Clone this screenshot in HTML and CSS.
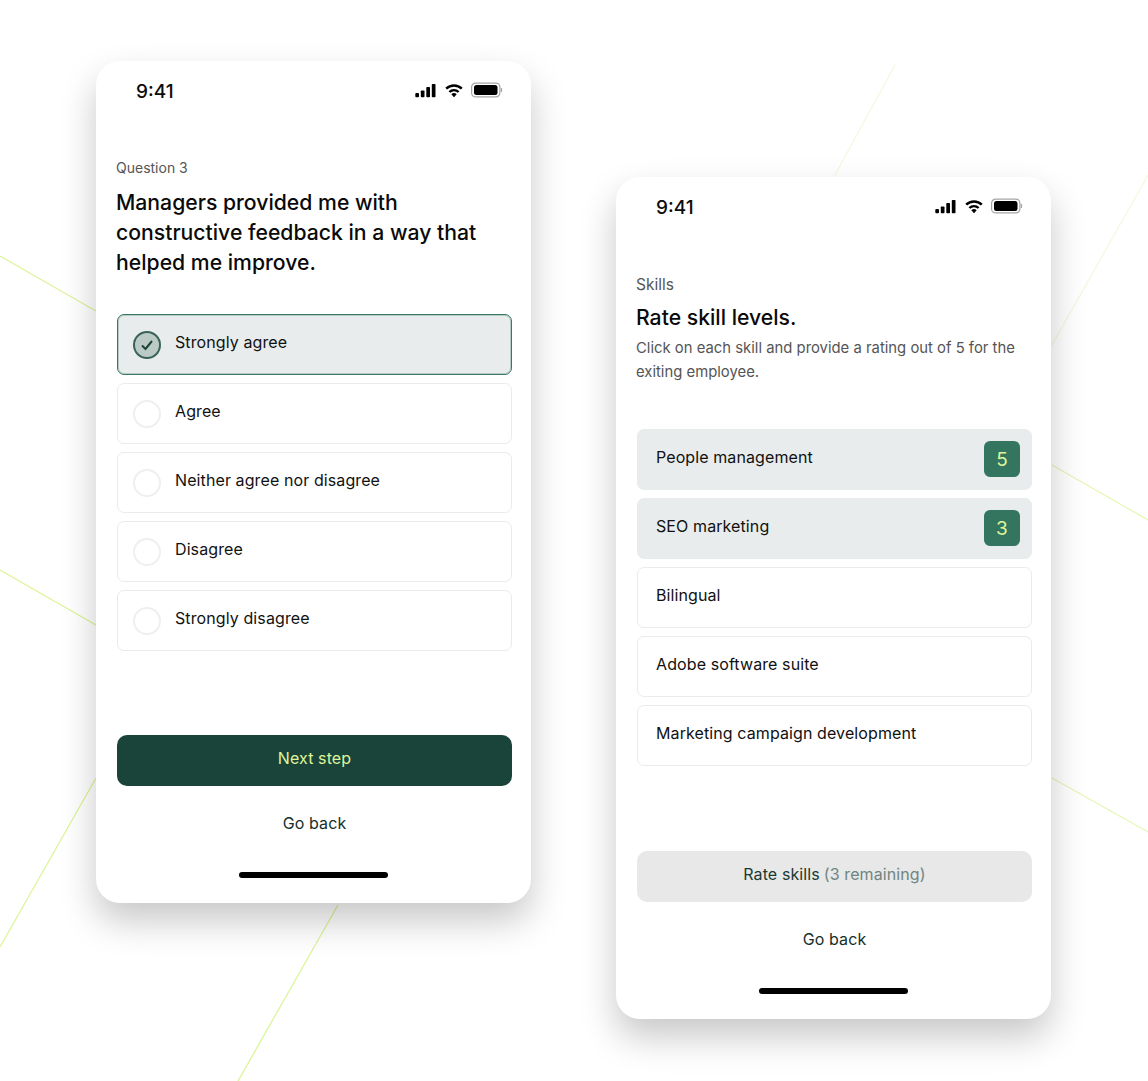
FILE: index.html
```html
<!DOCTYPE html>
<html lang="en">
<head>
<meta charset="utf-8">
<title>Survey screens</title>
<link rel="stylesheet" href="styles.css">
</head>
<body>
<main class="canvas">
  <svg class="lines" width="1148" height="1081" viewBox="0 0 1148 1081" aria-hidden="true">
    <path d="M0 256L96 311M0 570L96 625M0 947L96 778M238 1081L338 905"/>
    <path class="faint" d="M835 175L895 65M1052 345L1148 175"/>
    <path class="mid" d="M1052 465L1148 520M1052 778L1148 832"/>
  </svg>

  <section class="phone phone-left">
    <div class="status"><span class="time">9:41</span>
      <svg class="status-icons" width="88" height="16" viewBox="0 0 88 16"><rect x=".3" y="11" width="3.700" height="4.200" rx="1"/><rect x="5.800" y="8.500" width="3.700" height="6.700" rx=".8"/><rect x="11.300" y="5" width="3.700" height="10.200" rx=".8"/><rect x="16.800" y="2" width="3.700" height="13.200" rx=".8"/><path class="arc" d="M31.200 6.700A11 11 0 0 1 46.800 6.700M34.400 10A6.500 6.500 0 0 1 43.600 10"/><path d="M39 15.200L36.300 12.200a4 4 0 0 1 5.400 0z"/><rect class="batt" x="56.600" y="1.100" width="28.300" height="13.800" rx="4"/><rect x="59" y="3" width="23.500" height="10" rx="2.500"/><rect class="nub" x="85.800" y="6" width="1.300" height="4" rx=".6"/></svg>
    </div>
    <div class="body">
      <p class="eyebrow">Question 3</p>
      <h1 class="title">Managers provided me with constructive feedback in a way that helped me improve.</h1>
      <ul class="list list-q">
        <li class="row picked"><span class="radio on"><svg width="14" height="12" viewBox="0 0 14 12"><path d="M2 6.500L5.500 10L12 2"/></svg></span>Strongly agree</li>
        <li class="row"><span class="radio"></span>Agree</li>
        <li class="row"><span class="radio"></span>Neither agree nor disagree</li>
        <li class="row"><span class="radio"></span>Disagree</li>
        <li class="row"><span class="radio"></span>Strongly disagree</li>
      </ul>
    </div>
    <div class="actions">
      <div class="btn btn-dark">Next step</div>
      <div class="back">Go back</div>
      <div class="home"></div>
    </div>
  </section>

  <section class="phone phone-right">
    <div class="status"><span class="time">9:41</span>
      <svg class="status-icons" width="88" height="16" viewBox="0 0 88 16"><rect x=".3" y="11" width="3.700" height="4.200" rx="1"/><rect x="5.800" y="8.500" width="3.700" height="6.700" rx=".8"/><rect x="11.300" y="5" width="3.700" height="10.200" rx=".8"/><rect x="16.800" y="2" width="3.700" height="13.200" rx=".8"/><path class="arc" d="M31.200 6.700A11 11 0 0 1 46.800 6.700M34.400 10A6.500 6.500 0 0 1 43.600 10"/><path d="M39 15.200L36.300 12.200a4 4 0 0 1 5.400 0z"/><rect class="batt" x="56.600" y="1.100" width="28.300" height="13.800" rx="4"/><rect x="59" y="3" width="23.500" height="10" rx="2.500"/><rect class="nub" x="85.800" y="6" width="1.300" height="4" rx=".6"/></svg>
    </div>
    <div class="body">
      <p class="eyebrow eyebrow-lg">Skills</p>
      <h1 class="title title-one">Rate skill levels.</h1>
      <p class="desc">Click on each skill and provide a rating out of 5 for the exiting employee.</p>
      <ul class="list list-s">
        <li class="row skill rated">People management<span class="score">5</span></li>
        <li class="row skill rated">SEO marketing<span class="score">3</span></li>
        <li class="row skill">Bilingual</li>
        <li class="row skill">Adobe software suite</li>
        <li class="row skill">Marketing campaign development</li>
      </ul>
    </div>
    <div class="actions">
      <div class="btn btn-grey">Rate skills <span class="muted">(3 remaining)</span></div>
      <div class="back">Go back</div>
      <div class="home"></div>
    </div>
  </section>
</main>
</body>
</html>
```
FILE: styles.css
```css
* { box-sizing: border-box; }
html, body { margin: 0; padding: 0; background: #fff; }
body { font-family: "Inter", "Liberation Sans", sans-serif; color: #0b1512; }
.canvas { position: relative; width: 1148px; height: 1081px; overflow: hidden; display: flex; align-items: flex-start; gap: 85px; padding: 61px 0 0 96px; }
.lines { position: absolute; left: 0; top: 0; }
.lines path { stroke: #dcf59a; stroke-width: 1.300; fill: none; }
.lines .faint { stroke: #f3f9df; }
.lines .mid { stroke: #e6f7b8; }
.phone { position: relative; flex: none; width: 435px; height: 842px; background: #fff; border-radius: 24px; box-shadow: 0 18px 36px rgba(0,0,0,.22); display: flex; flex-direction: column; padding: 0 19px 0 21px; }
.phone-right { margin-top: 116px; }
.status { height: 60px; display: flex; justify-content: space-between; align-items: center; padding: 0 9px 0 19px; }
.time { font-size: 19px; font-weight: 550; color: #0c0c0c; }
.status-icons { fill: #000; margin-top: -2px; }
.status-icons .arc { fill: none; stroke: #000; stroke-width: 2.400; }
.status-icons .batt { fill: none; stroke: #a5a5a5; stroke-width: 1.200; }
.status-icons .nub { fill: #a5a5a5; }
.body { flex: 1; }
.eyebrow { margin: 37px 0 0 -1px; font-size: 14px; line-height: 20px; font-weight: 400; color: #555; }
.eyebrow-lg { font-size: 15.500px; margin-top: 38px; margin-left: -1px; }
.title { margin: 9px 0 0 -1px; font-size: 21.200px; line-height: 30px; font-weight: 450; color: #0a0a0a; }
.title-one { margin-top: 7px; }
.desc { margin: 4px 0 0 -1px; font-size: 14.850px; line-height: 24px; color: #555; }
.list { list-style: none; margin: 0; padding: 0; display: flex; flex-direction: column; gap: 8px; }
.list-q { margin-top: 37px; }
.list-s { margin-top: 45px; }
.list-q .row { padding-bottom: 5px; }
.row { height: 61px; display: flex; align-items: center; gap: 14px; padding: 0 15px 3px; border: 1px solid #ebebeb; border-radius: 7px; font-size: 16px; font-weight: 435; letter-spacing: .1px; color: #111; }
.list-q .picked { background: #e8ecec; border: 1px solid #3a7a64; box-shadow: inset 0 0 0 1px rgba(58,122,100,.3); }
.radio { width: 28px; height: 28px; flex: none; border-radius: 50%; border: 2px solid #efefef; display: flex; align-items: center; justify-content: center; margin-top: 5px; }
.radio.on { background: #bccac6; border-color: #3a6358; }
.radio svg path { fill: none; stroke: #1b4338; stroke-width: 2; }
.skill { justify-content: space-between; padding: 0 11px 5px 18px; }
.rated { background: #e8ecec; border-color: #e8ecec; }
.score { width: 36px; height: 36px; border-radius: 6px; background: #347560; color: #dff59a; display: flex; align-items: center; justify-content: center; font-size: 19px; font-weight: 400; margin-top: 3px; padding-top: 2px; }
.actions { display: flex; flex-direction: column; align-items: center; padding-bottom: 25px; }
.btn { width: 100%; height: 51px; border-radius: 10px; display: flex; align-items: center; justify-content: center; gap: 4px; font-size: 16px; font-weight: 435; letter-spacing: .1px; padding-bottom: 5px; }
.btn-dark { background: #1a433a; color: #dff59a; }
.btn-grey { background: #e8e8e8; color: #1a3a32; }
.muted { color: #6f8580; font-weight: 400; }
.back { margin-top: 24px; height: 26px; line-height: 26px; font-size: 16px; font-weight: 435; letter-spacing: .1px; color: #15302a; }
.home { margin: 36px 0 0 -2px; width: 149px; height: 6px; border-radius: 3px; background: #000; }
```
